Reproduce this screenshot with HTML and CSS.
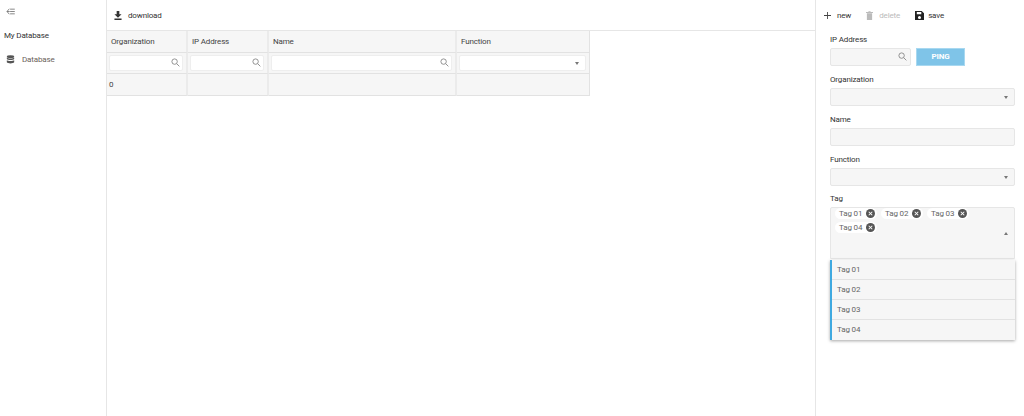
FILE: index.html
```html
<!DOCTYPE html>
<html lang="en">
<head>
<meta charset="utf-8">
<title>My Database</title>
<link rel="stylesheet" href="styles.css">
</head>
<body>
<div class="app">
  <aside class="sidebar">
    <div class="collapse">
      <svg width="9" height="7" viewBox="0 0 11 9" fill="none" stroke="#666" stroke-width="1"><path d="M4 1 1 4.500 4 8M1 4.500h3.500M5 1.500h6M5 4.500h6M5 7.500h6"/></svg>
    </div>
    <div class="app-title">My Database</div>
    <div class="nav-item">
      <svg width="9" height="9" viewBox="0 0 10 11" fill="#555"><ellipse cx="5" cy="2" rx="4.500" ry="1.800"/><path d="M.5 3.400C1.500 4.600 8.500 4.600 9.500 3.400V5C8.500 6.600 1.500 6.600.5 5zM.5 6.400C1.500 7.600 8.500 7.600 9.500 6.400V9C8.500 10.800 1.500 10.800.5 9z"/></svg>
      <span>Database</span>
    </div>
  </aside>
  <main class="main">
    <div class="toolbar">
      <button class="tool">
        <svg width="8" height="9" viewBox="0 0 9 10" fill="#333"><path d="M3 0h3v3.500h2.500L4.500 7.500.5 3.500H3zM.5 8.500h8V10h-8z"/></svg>
        <span>download</span>
      </button>
    </div>
    <div class="grid">
      <div class="cell head c1">Organization</div>
      <div class="cell head c2">IP Address</div>
      <div class="cell head c3">Name</div>
      <div class="cell head c4">Function</div>
      <div class="cell filter c1"><div class="filter-box"><svg class="search" width="9" height="9" viewBox="0 0 10 10" fill="none" stroke="#888"><circle cx="4" cy="4" r="3"/><path d="m6.300 6.300 3 3"/></svg></div></div>
      <div class="cell filter c2"><div class="filter-box"><svg class="search" width="9" height="9" viewBox="0 0 10 10" fill="none" stroke="#888"><circle cx="4" cy="4" r="3"/><path d="m6.300 6.300 3 3"/></svg></div></div>
      <div class="cell filter c3"><div class="filter-box"><svg class="search" width="9" height="9" viewBox="0 0 10 10" fill="none" stroke="#888"><circle cx="4" cy="4" r="3"/><path d="m6.300 6.300 3 3"/></svg></div></div>
      <div class="cell filter c4"><div class="filter-box"><i class="caret"></i></div></div>
      <div class="cell data c1">0</div>
      <div class="cell data c2"></div>
      <div class="cell data c3"></div>
      <div class="cell data c4"></div>
    </div>
  </main>
  <aside class="panel">
    <div class="panel-tools">
      <button class="tool tool-new">
        <svg width="7" height="7" viewBox="0 0 8 8" fill="#444"><path d="M3.500 0h1v3.500H8v1H4.500V8h-1V4.500H0v-1h3.500z"/></svg>
        <span>new</span>
      </button>
      <button class="tool tool-delete">
        <svg width="7" height="9" viewBox="0 0 8 10" fill="#bbb"><path d="M1 2.500h6V10H1zM0 1h2.500l.5-1h2l.5 1H8v1H0z"/></svg>
        <span>delete</span>
      </button>
      <button class="tool tool-save">
        <svg width="9" height="9" viewBox="0 0 10 10" fill="#222"><path fill-rule="evenodd" d="M0 0h7.500L10 2.500V10H0zM2 1v2.500h5V1zM5 5.500a1.700 1.700 0 1 0 0 3.400 1.700 1.700 0 0 0 0-3.400z"/></svg>
        <span>save</span>
      </button>
    </div>
    <form class="form">
      <div class="field">
        <label>IP Address</label>
        <div class="ip-row">
          <div class="input ip-input"><svg class="search" width="9" height="9" viewBox="0 0 10 10" fill="none" stroke="#888"><circle cx="4" cy="4" r="3"/><path d="m6.300 6.300 3 3"/></svg></div>
          <div class="ping">PING</div>
        </div>
      </div>
      <div class="field">
        <label>Organization</label>
        <div class="input"><i class="caret"></i></div>
      </div>
      <div class="field">
        <label>Name</label>
        <div class="input"></div>
      </div>
      <div class="field">
        <label>Function</label>
        <div class="input"><i class="caret"></i></div>
      </div>
      <div class="field tag-field">
        <label>Tag</label>
        <div class="tag-box">
          <div class="chips">
            <span class="chip">Tag 01<i class="x"></i></span>
            <span class="chip">Tag 02<i class="x"></i></span>
            <span class="chip">Tag 03<i class="x"></i></span>
            <span class="chip">Tag 04<i class="x"></i></span>
          </div>
          <i class="caret up"></i>
        </div>
        <ul class="menu">
          <li>Tag 01</li>
          <li>Tag 02</li>
          <li>Tag 03</li>
          <li>Tag 04</li>
        </ul>
      </div>
    </form>
  </aside>
</div>
</body>
</html>
```
FILE: styles.css
```css
* { box-sizing: border-box; }
html, body { margin: 0; height: 100%; }
body { font-family: Roboto, "Liberation Sans", sans-serif; font-size: 8px; letter-spacing: -0.15px; color: #444; background: #fff; overflow: hidden; }
.app { display: flex; width: 1024px; height: 416px; }

.sidebar { width: 107px; flex: none; border-right: 1px solid #e6e6e6; }
.collapse { height: 29px; padding: 8px 0 0 6px; }
.collapse svg { display: block; }
.app-title { padding-left: 4px; line-height: 13px; color: #333; }
.nav-item { display: flex; align-items: center; gap: 7px; margin-top: 11px; padding-left: 6px; height: 12px; color: #6b5f5a; }

.main { flex: 1; min-width: 0; }
.toolbar { height: 31px; padding: 10px 0 0 7px; border-bottom: 1px solid #e6e6e6; }
.tool { display: flex; align-items: center; gap: 6px; height: 10px; padding: 0; border: 0; background: none; font: inherit; letter-spacing: inherit; color: #333; }
.grid { display: grid; grid-template-columns: 81px 81px 188px 133px; width: 483px; background: #f6f6f6; }
.cell { border-right: 2px solid #ebebeb; border-bottom: 1px solid #e2e2e2; }
.c4 { border-right: 1px solid #e2e2e2; }
.head { height: 22px; padding: 0 4px; line-height: 21px; color: #444; }
.filter { height: 21px; padding: 2px 3px 2px 2px; }
.data { height: 22px; padding: 0 2px; line-height: 22px; color: #444; }
.filter-box { position: relative; height: 16px; background: #fff; border: 1px solid #eee; border-radius: 2px; }
.search { position: absolute; right: 2px; top: 2px; }
.caret { position: absolute; right: 6px; top: 50%; width: 0; height: 0; margin-top: -1px; border: 2px solid transparent; border-top: 3px solid #777; border-bottom: 0; }
.caret.up { border-top: 0; border-bottom: 3px solid #777; }

.panel { width: 209px; flex: none; border-left: 1px solid #e6e6e6; padding: 10px 0 0 8px; }
.panel-tools { display: flex; height: 10px; }
.tool-new { margin-right: 15px; }
.tool-delete { margin-right: 15px; color: #bbb; }
.tool-save { gap: 4px; }
.form { margin: 14px 0 0 6px; width: 185px; }
.field { margin-bottom: 8px; }
label { display: block; height: 14px; line-height: 11px; color: #333; }
.input { position: relative; height: 18px; background: #f6f6f6; border: 1px solid #e6e6e6; border-radius: 2px; }
.ip-row { display: flex; gap: 5px; }
.ip-input { width: 81px; }
.ip-input .search { right: 3px; top: 3px; }
.ping { width: 49px; height: 18px; background: #7fc4e8; border: 1px solid #a8d8f0; color: #fff; font-weight: 700; text-align: center; line-height: 16px; }

.tag-field { position: relative; margin-top: -1px; }
.tag-box { position: relative; height: 52px; background: #f6f6f6; border: 1px solid #e6e6e6; border-radius: 2px 2px 0 0; padding: 0 4px; }
.tag-box .caret { top: 24px; margin-top: 0; }
.chips { display: flex; flex-wrap: wrap; column-gap: 4px; row-gap: 3px; width: 150px; }
.chip { display: inline-flex; align-items: center; justify-content: space-between; height: 11px; padding: 0 2px 0 4px; width: 42px; background: #fff; border-radius: 6px; color: #666; }
.x { position: relative; width: 9px; height: 9px; border-radius: 50%; background: #555; flex: none; }
.x::before, .x::after { content: ""; position: absolute; left: 2px; top: 4px; width: 5px; height: 1px; background: #fff; transform: rotate(45deg); }
.x::after { transform: rotate(-45deg); }
.menu { position: absolute; left: 0; right: 0; top: 67px; margin: 0; padding: 0; list-style: none; background: #f6f6f6; box-shadow: 0 1px 3px rgba(0,0,0,.35); border-left: 2px solid #3fa9e0; z-index: 2; }
.menu li { height: 20px; padding-left: 5px; line-height: 20px; border-bottom: 1px solid #e2e2e2; color: #666; }
.menu li:last-child { border-bottom: 0; }
```
